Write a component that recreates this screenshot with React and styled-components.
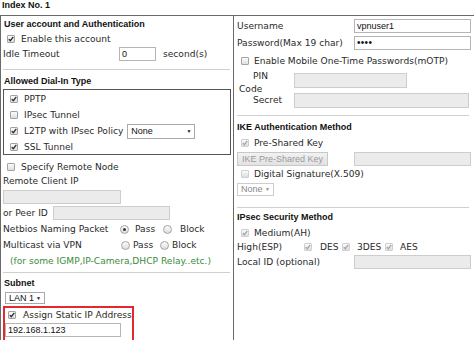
import React from "react";
import styled, { createGlobalStyle } from "styled-components";

const GlobalStyle = createGlobalStyle`
  html, body { margin: 0; padding: 0; background: #fff; }
  body {
    width: 474px; height: 340px; overflow: hidden;
    font-family: "DejaVu Sans", Verdana, sans-serif;
    font-size: 9.1px; color: #2a2a2a;
  }
`;

const Page = styled.div`
  width: 474px;
  height: 340px;
  overflow: hidden;
`;

const Title = styled.div`
  height: 15px;
  line-height: 15px;
  padding-left: 2px;
  font: bold 9px "Liberation Sans", Arial, sans-serif;
  color: #111;
`;

const Frame = styled.div`
  display: grid;
  grid-template-columns: 233px 1fr;
  border-top: 1px solid #6a6a6a;
  border-left: 1px solid #6a6a6a;
  height: 325px;
`;

const LeftCol = styled.div`
  box-sizing: border-box;
  border-right: 1px solid #6a6a6a;
  padding: 0 1px 0 2px;
`;

const RightCol = styled.div`
  box-sizing: border-box;
  padding: 1px 4px 0 3px;
`;

const Row = styled.div`
  display: flex;
  align-items: center;
  height: ${(p) => p.$h || 16}px;
  margin-top: ${(p) => p.$mt || 0}px;
  padding-left: ${(p) => p.$pl || 0}px;
  white-space: nowrap;
`;

const Heading = styled(Row)`
  font: bold 9px "Liberation Sans", Arial, sans-serif;
  color: #111;
`;

const Rule = styled.div`
  height: 1px;
  background: #cfcfcf;
  margin-top: ${(p) => p.$mt || 0}px;
  margin-right: 2px;
`;

const DialBox = styled.div`
  box-sizing: border-box;
  height: 66px;
  border: 1px solid #555;
  padding: 1px 0 0 6px;
  margin-right: 1px;
`;

const FieldGrid = styled.div`
  display: grid;
  grid-template-columns: ${(p) => p.$label || 117}px 1fr;
  align-items: ${(p) => p.$align || "center"};
  height: ${(p) => p.$h || 16}px;
  margin-top: ${(p) => p.$mt || 0}px;
  white-space: nowrap;
`;

const Input = styled.div`
  box-sizing: border-box;
  width: ${(p) => p.$w}px;
  height: ${(p) => p.$h || 14}px;
  margin-left: ${(p) => p.$ml || 0}px;
  margin-top: ${(p) => p.$mt || 0}px;
  border: 1px solid ${(p) => (p.$disabled ? "#cdcdcd" : "#b5b5b5")};
  background: ${(p) => (p.$disabled ? "#ebebeb" : "#fff")};
  font: 9px "Liberation Sans", Arial, sans-serif;
  color: #111;
  padding-left: 2px;
  display: flex;
  align-items: center;
  flex: none;
`;

const Dots = styled.span`
  font: 10px "Liberation Sans", Arial, sans-serif;
  letter-spacing: 0.3px;
  line-height: 1;
`;

const Select = styled.div`
  box-sizing: border-box;
  width: ${(p) => p.$w}px;
  height: ${(p) => p.$h || 13}px;
  margin-left: ${(p) => p.$ml || 0}px;
  border: 1px solid ${(p) => (p.$disabled ? "#cdcdcd" : "#a9a9a9")};
  background: #fff;
  font: 9px "Liberation Sans", Arial, sans-serif;
  color: ${(p) => (p.$disabled ? "#888" : "#111")};
  padding: 0 3px 0 3px;
  display: flex;
  align-items: center;
  justify-content: space-between;
  flex: none;
`;

const Arrow = styled.span`
  font-size: 5px;
  color: ${(p) => (p.$disabled ? "#888" : "#111")};
`;

const Button = styled.div`
  box-sizing: border-box;
  width: 91px;
  height: 14px;
  border: 1px solid #c8c8c8;
  background: linear-gradient(#f2f2f2, #e2e2e2);
  font: 9px "Liberation Sans", Arial, sans-serif;
  color: #9a9a9a;
  display: flex;
  align-items: center;
  justify-content: center;
`;

const Box = styled.span`
  box-sizing: border-box;
  display: inline-flex;
  align-items: center;
  justify-content: center;
  width: 8px;
  height: 8px;
  flex: none;
  margin-left: ${(p) => p.$ml || 0}px;
  margin-right: ${(p) => p.$mr || 6}px;
  border: 1px solid ${(p) => (p.$disabled ? "#cfcfcf" : "#a3a3a3")};
  border-radius: 1px;
  background: linear-gradient(#fbfbfb, #dedede);
`;

const Radio = styled(Box)`
  border-radius: 50%;
  width: 9px;
  height: 9px;
`;

const Dot = styled.span`
  width: 3px;
  height: 3px;
  border-radius: 50%;
  background: #333;
`;

const Label = styled.span`
  display: inline-block;
  flex: none;
  width: ${(p) => (p.$w ? `${p.$w}px` : "auto")};
  margin-left: ${(p) => p.$ml || 0}px;
`;

const Green = styled(Row)`
  color: #3d8b3d;
  padding-left: 7px;
`;

const RedBox = styled.div`
  box-sizing: border-box;
  width: 131px;
  height: 40px;
  margin-top: 1px;
  border: 2px solid #e02a2f;
  border-bottom: none;
`;

const PinLabel = styled.div`
  line-height: 12.5px;
  padding-left: 2px;
`;

const Indent = styled.div`
  padding-left: ${(p) => p.$pl || 0}px;
`;

const Check = ({ checked, disabled, ml, mr }) => (
  <Box $disabled={disabled} $ml={ml} $mr={mr}>
    {checked && (
      <svg width="6" height="6" viewBox="0 0 6 6">
        <path
          d="M0.8 3.1 L2.3 4.7 L5.3 0.9"
          fill="none"
          stroke={disabled ? "#a5a5a5" : "#2b2b2b"}
          strokeWidth="1.3"
        />
      </svg>
    )}
  </Box>
);

const RadioBtn = ({ checked, ml, mr }) => (
  <Radio $ml={ml} $mr={mr}>
    {checked && <Dot />}
  </Radio>
);

export default function App() {
  return (
    <Page>
      <GlobalStyle />
      <Title>Index No. 1</Title>
      <Frame>
        <LeftCol>
          <Heading $h={16} $pl={1}>User account and Authentication</Heading>
          <Row $h={14}>
            <Check checked ml={4} mr={6} />
            Enable this account
          </Row>
          <Row $h={16}>
            <Label $w={116}>Idle Timeout</Label>
            <Input $w={37}>0</Input>
            <Label $ml={7}>second(s)</Label>
          </Row>
          <Rule $mt={7} />
          <Heading $h={16} $mt={3} $pl={1}>Allowed Dial-In Type</Heading>
          <DialBox>
            <Row $h={16}>
              <Check checked mr={6} />
              PPTP
            </Row>
            <Row $h={16}>
              <Check mr={6} />
              IPsec Tunnel
            </Row>
            <Row $h={16}>
              <Check checked mr={6} />
              L2TP with IPsec Policy
              <Select $w={68} $h={15} $ml={4}>
                <span>None</span>
                <Arrow>▼</Arrow>
              </Select>
            </Row>
            <Row $h={15}>
              <Check checked mr={6} />
              SSL Tunnel
            </Row>
          </DialBox>
          <Row $h={14} $mt={5}>
            <Check ml={4} mr={6} />
            Specify Remote Node
          </Row>
          <Row $h={14}>Remote Client IP</Row>
          <Row $h={17}>
            <Input $w={118} $h={14} $disabled />
          </Row>
          <Row $h={16}>
            <Label $w={50}>or Peer ID</Label>
            <Input $w={117} $h={14} $disabled />
          </Row>
          <Row $h={16}>
            <Label $w={117}>Netbios Naming Packet</Label>
            <RadioBtn checked mr={6} />
            <Label $w={23}>Pass</Label>
            <RadioBtn ml={5} mr={8} />
            Block
          </Row>
          <Row $h={16}>
            <Label $w={118}>Multicast via VPN</Label>
            <RadioBtn mr={3} />
            <Label $w={23}>Pass</Label>
            <RadioBtn ml={4} mr={3} />
            Block
          </Row>
          <Green $h={15}>(for some IGMP,IP-Camera,DHCP Relay..etc.)</Green>
          <Rule $mt={4} />
          <Heading $h={16} $mt={2} $pl={1}>Subnet</Heading>
          <Row $h={14}>
            <Select $w={40} $h={12} $ml={2}>
              <span>LAN 1</span>
              <Arrow>▼</Arrow>
            </Select>
          </Row>
          <RedBox>
            <Row $h={14}>
              <Check checked ml={3} mr={7} />
              Assign Static IP Address
            </Row>
            <Row $h={15}>
              <Input $w={116} $h={14}>192.168.1.123</Input>
            </Row>
          </RedBox>
        </LeftCol>
        <RightCol>
          <FieldGrid $h={17}>
            <span>Username</span>
            <Input $w={117} $h={14}>vpnuser1</Input>
          </FieldGrid>
          <FieldGrid $h={17}>
            <span>Password(Max 19 char)</span>
            <Input $w={117} $h={14}>
              <Dots>••••</Dots>
            </Input>
          </FieldGrid>
          <Row $h={16} $mt={2}>
            <Check ml={4} mr={5} />
            Enable Mobile One-Time Passwords(mOTP)
          </Row>
          <FieldGrid $label={57} $h={22} $mt={1} $align="start">
            <PinLabel>
              <Indent $pl={14}>PIN</Indent>
              <Indent>Code</Indent>
            </PinLabel>
            <Input $w={113} $h={15} $mt={3} $disabled />
          </FieldGrid>
          <FieldGrid $label={57} $h={16}>
            <Indent $pl={16}>Secret</Indent>
            <Input $w={175} $h={15} $disabled />
          </FieldGrid>
          <Rule $mt={7} />
          <Heading $h={16} $mt={3}>IKE Authentication Method</Heading>
          <Row $h={16}>
            <Check checked disabled ml={4} mr={5} />
            Pre-Shared Key
          </Row>
          <FieldGrid $h={16}>
            <Button>IKE Pre-Shared Key</Button>
            <Input $w={117} $h={14} $disabled />
          </FieldGrid>
          <Row $h={13}>
            <Check disabled ml={4} mr={5} />
            Digital Signature(X.509)
          </Row>
          <Row $h={18}>
            <Select $w={37} $h={13} $disabled>
              <span>None</span>
              <Arrow $disabled>▼</Arrow>
            </Select>
          </Row>
          <Rule $mt={9} />
          <Heading $h={16} $mt={1}>IPsec Security Method</Heading>
          <Row $h={15}>
            <Check checked disabled ml={4} mr={5} />
            Medium(AH)
          </Row>
          <Row $h={14}>
            <Label $w={67}>High(ESP)</Label>
            <Check checked disabled mr={8} />
            <Label $w={22}>DES</Label>
            <Check checked disabled mr={7} />
            <Label $w={28}>3DES</Label>
            <Check checked disabled mr={7} />
            AES
          </Row>
          <FieldGrid $h={16}>
            <span>Local ID (optional)</span>
            <Input $w={117} $h={14} $disabled />
          </FieldGrid>
        </RightCol>
      </Frame>
    </Page>
  );
}
